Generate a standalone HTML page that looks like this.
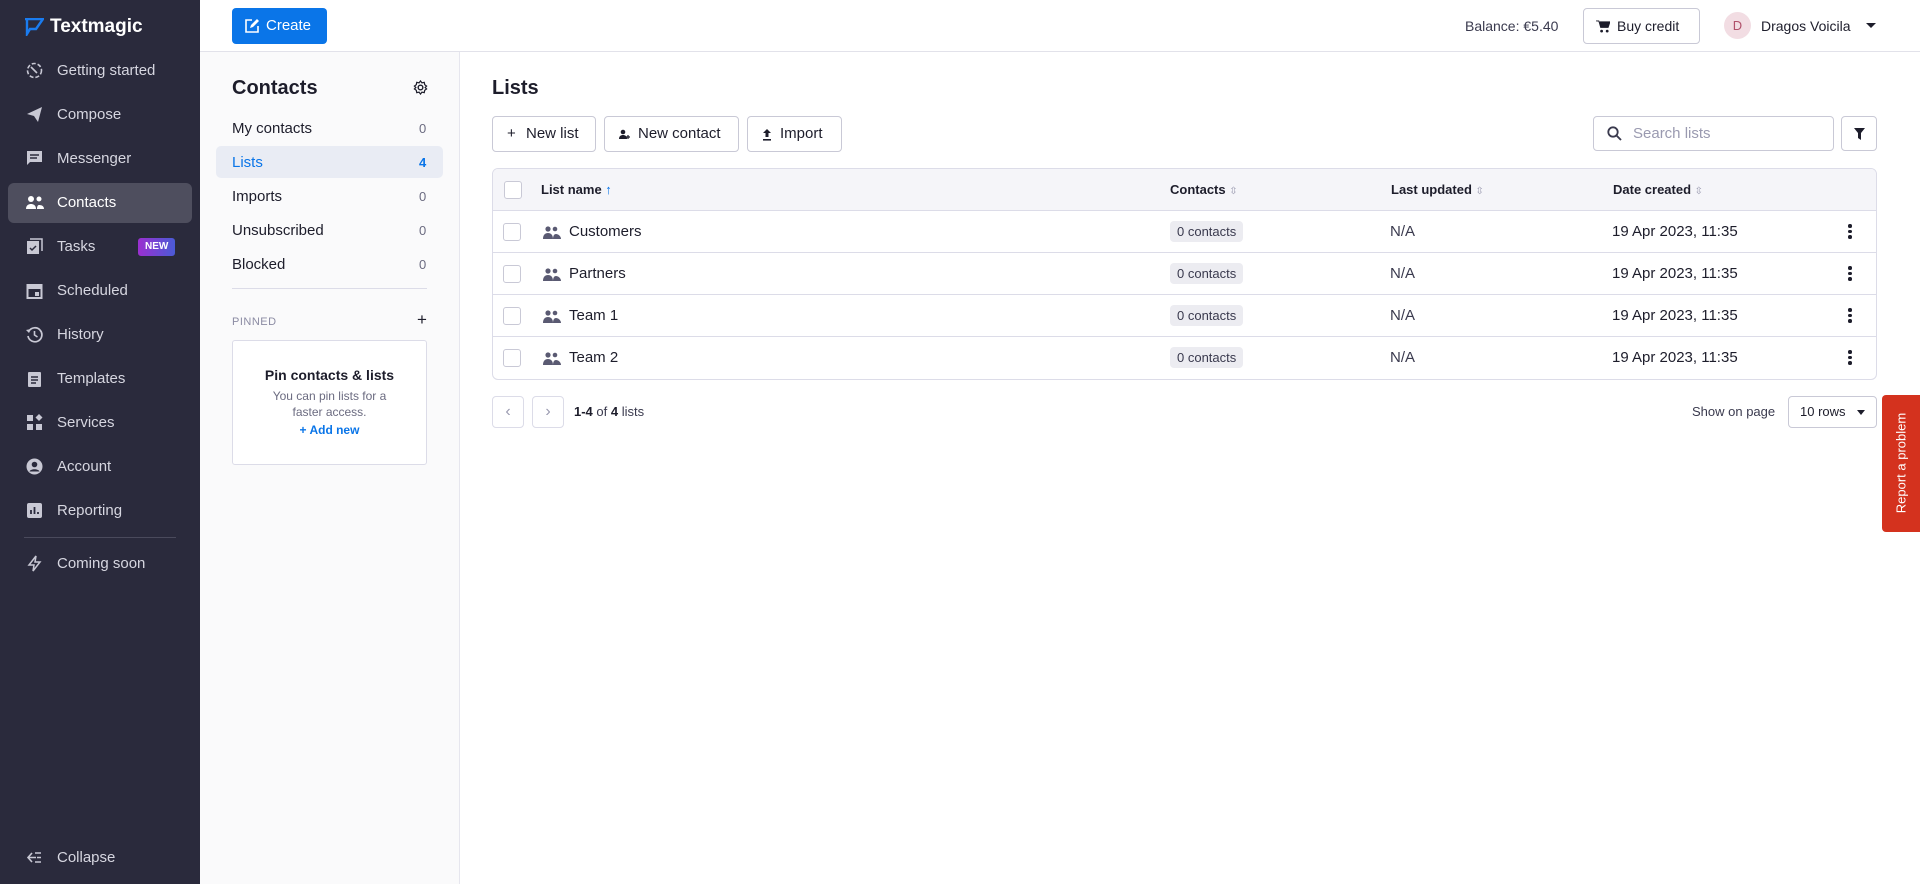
<!DOCTYPE html>
<html><head><meta charset="utf-8"><style>
*{box-sizing:border-box;margin:0;padding:0}
body{width:1920px;height:884px;overflow:hidden;font-family:"Liberation Sans",sans-serif;background:#fff;position:relative;color:#1d1d2b}
.a{position:absolute}
#sb{left:0;top:0;width:200px;height:884px;background:#2a2a3c}
.nav{position:absolute;left:8px;width:184px;height:40px;border-radius:6px;color:#d6d6e0;font-size:15px;line-height:40px;padding-left:49px}
.nav.act{background:#4e4e5e;color:#fff}
.nav svg{position:absolute;left:18px;top:11px}
.btn{position:absolute;border:1px solid #c9c9d6;border-radius:4px;background:#fff;font-size:15px;line-height:34px;color:#1d1d2b;padding-left:14px}
.cl{position:absolute;left:232px;font-size:15px;color:#1d1d2b}
.cn{position:absolute;left:419px;font-size:13px;color:#6b6b80}
.row{position:absolute;left:492px;width:1385px;height:42px;border-top:1px solid #dcdce8;font-size:15px}
.row span{position:absolute;top:12px}
.cb{position:absolute;left:11px;top:12px;width:18px;height:18px;border:1px solid #c9c9d6;border-radius:3px;background:#fff}
.pill{position:absolute;left:678px;top:10px !important;background:#ececf1;border-radius:4px;font-size:13px;padding:3px 7px;color:#3a3a4e}
.kb{position:absolute;left:1356px;top:13px;width:4px}
.kb i{display:block;width:3.5px;height:3.5px;border-radius:50%;background:#1d1d2b;margin-bottom:2px}
</style></head><body>
<div id="sb" class="a">
 <svg class="a" style="left:24px;top:18px" width="20" height="18" viewBox="0 0 20 18"><path d="M1 1h18L12 11H6l-3 5V1z" fill="none" stroke="#1a7cf0" stroke-width="2.4"/></svg>
 <div class="a" style="left:50px;top:16px;color:#fff;font-weight:bold;font-size:19px">Textmagic</div>
 <div class="nav" style="top:51px"><svg width="17" height="17" viewBox="0 0 17 17"><circle cx="8.5" cy="8.5" r="7" fill="none" stroke="#c8c8d4" stroke-width="1.6" stroke-dasharray="4 2"/><path d="M5 5l6 6" stroke="#c8c8d4" stroke-width="1.6"/></svg>Getting started</div>
 <div class="nav" style="top:95px"><svg width="17" height="17" viewBox="0 0 17 17"><path d="M1 8L16 1 12 16 8 10z" fill="#c8c8d4"/></svg>Compose</div>
 <div class="nav" style="top:139px"><svg width="17" height="17" viewBox="0 0 17 17"><path d="M1 1h15v11H4l-3 3z" fill="#c8c8d4"/><path d="M4 5h9M4 8h7" stroke="#2a2a3c" stroke-width="1.4"/></svg>Messenger</div>
 <div class="nav act" style="top:183px"><svg width="18" height="17" viewBox="0 0 18 17"><circle cx="5" cy="5" r="3" fill="#fff"/><circle cx="13" cy="5" r="2.5" fill="#fff"/><path d="M0 15c0-4 3-5 5-5s5 1 5 5zM11 15c0-3 1-4 2-4s5 0 5 4z" fill="#fff"/></svg>Contacts</div>
 <div class="nav" style="top:227px"><svg width="17" height="17" viewBox="0 0 17 17"><rect x="1" y="3" width="12" height="13" fill="#c8c8d4"/><path d="M4 1h12v12" fill="none" stroke="#c8c8d4" stroke-width="1.5"/><path d="M4 10l2 2 4-4" stroke="#2a2a3c" stroke-width="1.5" fill="none"/></svg>Tasks<span style="position:absolute;left:130px;top:11px;height:18px;line-height:18px;padding:0 7px;border-radius:3px;background:linear-gradient(90deg,#9b2fd0,#4a5bd6);color:#fff;font-size:10px;font-weight:bold">NEW</span></div>
 <div class="nav" style="top:271px"><svg width="17" height="17" viewBox="0 0 17 17"><rect x="1.5" y="3" width="14" height="13" fill="none" stroke="#c8c8d4" stroke-width="2"/><path d="M1.5 3h14v4h-14z" fill="#c8c8d4"/><rect x="9" y="10" width="4" height="4" fill="#c8c8d4"/></svg>Scheduled</div>
 <div class="nav" style="top:315px"><svg width="17" height="17" viewBox="0 0 17 17"><path d="M3 5a7 7 0 1 1-1 5" fill="none" stroke="#c8c8d4" stroke-width="1.7"/><path d="M8.5 5v4l3 2" fill="none" stroke="#c8c8d4" stroke-width="1.6"/><path d="M0 4l3 3 2-4z" fill="#c8c8d4"/></svg>History</div>
 <div class="nav" style="top:359px"><svg width="17" height="17" viewBox="0 0 17 17"><rect x="2" y="2" width="13" height="15" rx="1" fill="#c8c8d4"/><path d="M5 7h7M5 10h7M5 13h5" stroke="#2a2a3c" stroke-width="1.4"/></svg>Templates</div>
 <div class="nav" style="top:403px"><svg width="17" height="17" viewBox="0 0 17 17"><rect x="1" y="1" width="6" height="6" fill="#c8c8d4"/><rect x="1" y="10" width="6" height="6" fill="#c8c8d4"/><rect x="10" y="10" width="6" height="6" fill="#c8c8d4"/><path d="M13 0l3.5 3.5L13 7 9.5 3.5z" fill="#c8c8d4"/></svg>Services</div>
 <div class="nav" style="top:447px"><svg width="17" height="17" viewBox="0 0 17 17"><circle cx="8.5" cy="8.5" r="8" fill="#c8c8d4"/><circle cx="8.5" cy="6.5" r="2.8" fill="#2a2a3c"/><path d="M3.5 13.5c1-3 9-3 10 0" fill="#2a2a3c"/></svg>Account</div>
 <div class="nav" style="top:491px"><svg width="17" height="17" viewBox="0 0 17 17"><rect x="1" y="1" width="15" height="15" rx="2" fill="#c8c8d4"/><path d="M5 12V8M8.5 12V5M12 12v-2" stroke="#2a2a3c" stroke-width="1.8"/></svg>Reporting</div>
 <div class="a" style="left:24px;top:537px;width:152px;height:1px;background:#4a4a5c"></div>
 <div class="nav" style="top:544px"><svg width="17" height="17" viewBox="0 0 17 17"><path d="M10 1L3 10h5l-1 6 7-9H9z" fill="none" stroke="#c8c8d4" stroke-width="1.5"/></svg>Coming soon</div>
 <div class="nav" style="top:838px"><svg width="17" height="17" viewBox="0 0 17 17"><path d="M6 4L2 8.5 6 13M2 8.5h8M9 4h6M11 8.5h4M9 13h6" fill="none" stroke="#c8c8d4" stroke-width="1.6"/></svg>Collapse</div>
</div>
<!-- top bar -->
<div class="a" style="left:200px;top:51px;width:1720px;height:1px;background:#e2e2ea"></div>
<div class="a" style="left:232px;top:8px;width:95px;height:36px;background:#0a75e8;border-radius:4px;color:#fff;font-size:15px;line-height:36px;padding-left:34px"><svg class="a" style="left:13px;top:11px" width="14" height="14" viewBox="0 0 14 14"><path d="M7 1H1v12h12V7" fill="none" stroke="#fff" stroke-width="1.6"/><path d="M5 9l1-3 6-6 2 2-6 6z" fill="#fff"/></svg>Create</div>
<div class="a" style="left:1465px;top:18px;font-size:14px;color:#3a3a4e">Balance: €5.40</div>
<div class="btn" style="left:1583px;top:8px;width:117px;height:36px;padding-left:33px;font-size:14px"><svg class="a" style="left:12px;top:11px" width="14" height="13" viewBox="0 0 15 14"><path d="M0 1h3l2 7h8l2-6H4" fill="#1d1d2b" stroke="#1d1d2b" stroke-width="1"/><circle cx="6" cy="12" r="1.5" fill="#1d1d2b"/><circle cx="12" cy="12" r="1.5" fill="#1d1d2b"/></svg>Buy credit</div>
<div class="a" style="left:1724px;top:12px;width:27px;height:27px;border-radius:50%;background:#f2dde3;color:#b0506a;font-size:13px;text-align:center;line-height:27px">D</div>
<div class="a" style="left:1761px;top:18px;font-size:14px;color:#1d1d2b;font-weight:500">Dragos Voicila</div>
<div class="a" style="left:1866px;top:23px;border:5px solid transparent;border-top:5px solid #1d1d2b;border-bottom:0"></div>
<!-- contacts panel -->
<div class="a" style="left:200px;top:52px;width:260px;height:832px;background:#fafafb;border-right:1px solid #e6e6ee"></div>
<div class="a" style="left:232px;top:77px;font-size:20px;font-weight:bold">Contacts</div>
<svg class="a" style="left:413px;top:80px" width="15" height="15" viewBox="0 0 16 16"><circle cx="8" cy="8" r="2.5" fill="none" stroke="#1d1d2b" stroke-width="1.5"/><path d="M8 1l1.5 2 2.5-.5.5 2.5 2 1.5-1.5 1.5 1.5 1.5-2 1.5-.5 2.5-2.5-.5L8 15l-1.5-2-2.5.5-.5-2.5-2-1.5L3 8 1.5 6.5l2-1.5.5-2.5 2.5.5z" fill="none" stroke="#1d1d2b" stroke-width="1.3"/></svg>
<div class="cl" style="top:120px">My contacts</div><div class="cn" style="top:121px">0</div>
<div class="a" style="left:216px;top:146px;width:227px;height:32px;background:#e9ecf4;border-radius:5px"></div>
<div class="cl" style="top:154px;color:#0a75e8">Lists</div><div class="cn" style="top:155px;color:#0a75e8;font-weight:bold">4</div>
<div class="cl" style="top:188px">Imports</div><div class="cn" style="top:189px">0</div>
<div class="cl" style="top:222px">Unsubscribed</div><div class="cn" style="top:223px">0</div>
<div class="cl" style="top:256px">Blocked</div><div class="cn" style="top:257px">0</div>
<div class="a" style="left:232px;top:288px;width:195px;height:1px;background:#dcdce8"></div>
<div class="a" style="left:232px;top:316px;font-size:11px;color:#8b8ba3;letter-spacing:.5px">PINNED</div>
<div class="a" style="left:417px;top:310px;font-size:17px;color:#1d1d2b">+</div>
<div class="a" style="left:232px;top:340px;width:195px;height:125px;border:1px solid #dcdce8;border-radius:3px;background:#fff;text-align:center">
 <div style="margin-top:26px;font-size:14px;font-weight:bold">Pin contacts &amp; lists</div>
 <div style="margin-top:5px;font-size:12px;color:#6b6b80;line-height:16px">You can pin lists for a<br>faster access.</div>
 <div style="margin-top:3px;font-size:12px;color:#0a75e8;font-weight:bold">+ Add new</div>
</div>
<!-- main -->
<div class="a" style="left:492px;top:77px;font-size:20px;font-weight:bold">Lists</div>
<div class="btn" style="left:492px;top:116px;width:104px;height:36px;padding-left:33px"><span class="a" style="left:14px;top:0;font-size:15px">+</span>New list</div>
<div class="btn" style="left:604px;top:116px;width:135px;height:36px;padding-left:33px"><svg class="a" style="left:14px;top:12px" width="11" height="11" viewBox="0 0 11 11"><circle cx="4" cy="3" r="2.3" fill="#1d1d2b"/><path d="M0 10c0-3 2-4 4-4s4 1 4 4z" fill="#1d1d2b"/><path d="M9 6v4M7 8h4" stroke="#1d1d2b" stroke-width="1.2"/></svg>New contact</div>
<div class="btn" style="left:747px;top:116px;width:95px;height:36px;padding-left:32px"><svg class="a" style="left:14px;top:11px" width="10" height="13" viewBox="0 0 10 13"><path d="M5 1L1 5h2.5v4h3V5H9z" fill="#1d1d2b"/><rect x="1" y="11" width="8" height="1.6" fill="#1d1d2b"/></svg>Import</div>
<div class="a" style="left:1593px;top:116px;width:241px;height:35px;border:1px solid #c9c9d6;border-radius:4px;font-size:15px;color:#9a9ab0;line-height:33px;padding-left:39px"><svg class="a" style="left:13px;top:9px" width="15" height="15" viewBox="0 0 15 15"><circle cx="6" cy="6" r="4.7" fill="none" stroke="#3a3a4e" stroke-width="1.8"/><path d="M9.5 9.5L14 14" stroke="#3a3a4e" stroke-width="1.9"/></svg>Search lists</div>
<div class="a" style="left:1841px;top:116px;width:36px;height:35px;border:1px solid #c9c9d6;border-radius:4px"><svg class="a" style="left:12px;top:11px" width="11" height="12" viewBox="0 0 11 12"><path d="M0 0h11L7 5v7L4 10V5z" fill="#1d1d2b"/></svg></div>
<!-- table -->
<div class="a" style="left:492px;top:168px;width:1385px;height:212px;border:1px solid #dcdce8;border-radius:6px;overflow:hidden">
 <div class="a" style="left:0;top:0;width:1385px;height:41px;background:#f5f5f9;font-size:13px;font-weight:bold">
  <div class="cb"></div>
  <span class="a" style="left:48px;top:13px">List name <span style="color:#0a75e8;font-weight:normal">↑</span></span>
  <span class="a" style="left:677px;top:13px">Contacts <span style="color:#9a9ab0;font-weight:normal;font-size:10px">⇳</span></span>
  <span class="a" style="left:898px;top:13px">Last updated <span style="color:#9a9ab0;font-weight:normal;font-size:10px">⇳</span></span>
  <span class="a" style="left:1120px;top:13px">Date created <span style="color:#9a9ab0;font-weight:normal;font-size:10px">⇳</span></span>
 </div>
</div>
<div class="row" style="top:210px"><div class="cb"></div><svg class="a" style="left:51px;top:15px" width="18" height="13" viewBox="0 0 18 13"><circle cx="5" cy="3" r="2.6" fill="#5a5a72"/><circle cx="12" cy="3" r="2.3" fill="#5a5a72"/><path d="M0 13c0-4 2-6 5-6s5 2 5 6zM10 13c0-3 1-5 3-5s5 2 5 5z" fill="#5a5a72"/></svg><span style="left:77px">Customers</span><span class="pill">0 contacts</span><span style="left:898px;color:#3a3a4e">N/A</span><span style="left:1120px">19 Apr 2023, 11:35</span><div class="kb"><i></i><i></i><i></i></div></div>
<div class="row" style="top:252px"><div class="cb"></div><svg class="a" style="left:51px;top:15px" width="18" height="13" viewBox="0 0 18 13"><circle cx="5" cy="3" r="2.6" fill="#5a5a72"/><circle cx="12" cy="3" r="2.3" fill="#5a5a72"/><path d="M0 13c0-4 2-6 5-6s5 2 5 6zM10 13c0-3 1-5 3-5s5 2 5 5z" fill="#5a5a72"/></svg><span style="left:77px">Partners</span><span class="pill">0 contacts</span><span style="left:898px;color:#3a3a4e">N/A</span><span style="left:1120px">19 Apr 2023, 11:35</span><div class="kb"><i></i><i></i><i></i></div></div>
<div class="row" style="top:294px"><div class="cb"></div><svg class="a" style="left:51px;top:15px" width="18" height="13" viewBox="0 0 18 13"><circle cx="5" cy="3" r="2.6" fill="#5a5a72"/><circle cx="12" cy="3" r="2.3" fill="#5a5a72"/><path d="M0 13c0-4 2-6 5-6s5 2 5 6zM10 13c0-3 1-5 3-5s5 2 5 5z" fill="#5a5a72"/></svg><span style="left:77px">Team 1</span><span class="pill">0 contacts</span><span style="left:898px;color:#3a3a4e">N/A</span><span style="left:1120px">19 Apr 2023, 11:35</span><div class="kb"><i></i><i></i><i></i></div></div>
<div class="row" style="top:336px"><div class="cb"></div><svg class="a" style="left:51px;top:15px" width="18" height="13" viewBox="0 0 18 13"><circle cx="5" cy="3" r="2.6" fill="#5a5a72"/><circle cx="12" cy="3" r="2.3" fill="#5a5a72"/><path d="M0 13c0-4 2-6 5-6s5 2 5 6zM10 13c0-3 1-5 3-5s5 2 5 5z" fill="#5a5a72"/></svg><span style="left:77px">Team 2</span><span class="pill">0 contacts</span><span style="left:898px;color:#3a3a4e">N/A</span><span style="left:1120px">19 Apr 2023, 11:35</span><div class="kb"><i></i><i></i><i></i></div></div>
<!-- pagination -->
<div class="a" style="left:492px;top:396px;width:32px;height:32px;border:1px solid #dcdce8;border-radius:4px;color:#9a9ab0;text-align:center;line-height:30px;font-size:16px">‹</div>
<div class="a" style="left:532px;top:396px;width:32px;height:32px;border:1px solid #dcdce8;border-radius:4px;color:#9a9ab0;text-align:center;line-height:30px;font-size:16px">›</div>
<div class="a" style="left:574px;top:404px;font-size:13px;color:#3a3a4e"><b style="color:#1d1d2b">1-4</b> of <b style="color:#1d1d2b">4</b> lists</div>
<div class="a" style="left:1692px;top:404px;font-size:13px;color:#3a3a4e">Show on page</div>
<div class="a" style="left:1788px;top:396px;width:89px;height:32px;border:1px solid #c9c9d6;border-radius:4px;font-size:13px;line-height:30px;padding-left:11px">10 rows<div class="a" style="left:68px;top:13px;border:4px solid transparent;border-top:5px solid #1d1d2b;border-bottom:0"></div></div>
<div class="a" style="left:1882px;top:395px;width:38px;height:137px;background:#d4321e;border-radius:4px 0 0 4px"><div class="a" style="left:19px;top:68px;transform:translate(-50%,-50%) rotate(-90deg);white-space:nowrap;color:#fff;font-size:13px">Report a problem</div></div>
</body></html>
